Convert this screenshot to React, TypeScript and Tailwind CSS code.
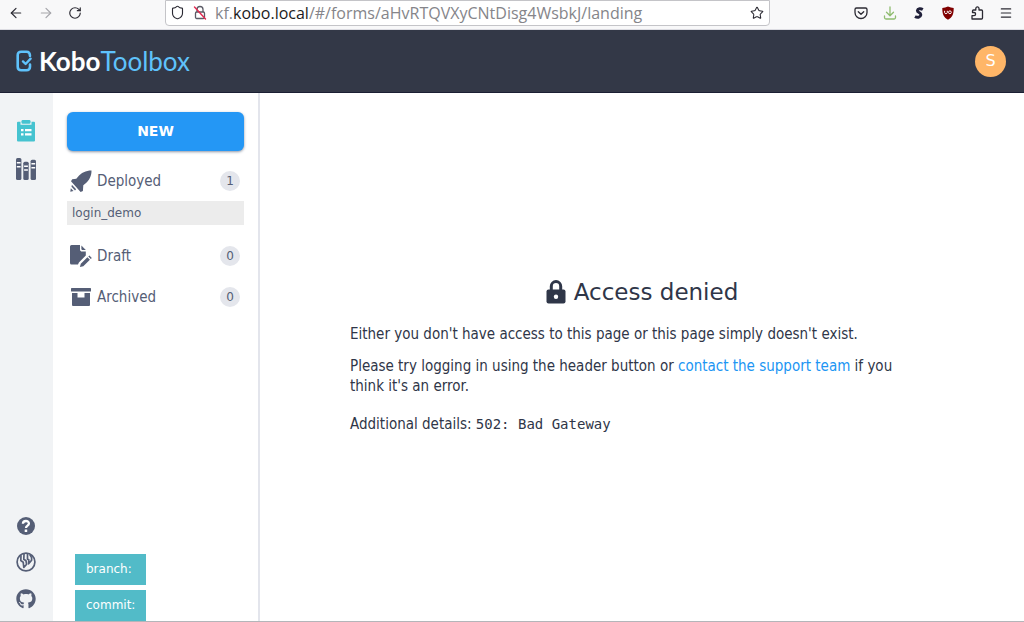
import React from "react";
import {
  ArrowLeft,
  ArrowRight,
  Menu,
  RotateCw,
  Shield,
  Star,
} from "lucide-react";
import { FaGithub } from "react-icons/fa";

function LogoMark() {
  return (
    <svg width="16" height="22" viewBox="0 0 16 22" fill="none" stroke="#5fc2fb" strokeLinecap="round" strokeLinejoin="round">
      <path
        d="M14 6C14 3 12.800 1.700 10.500 1.700H5.200C2.800 1.700 1.700 3 1.700 5.200v11.600c0 2.200 1.100 3.500 3.500 3.500h5.300c2.300 0 3.500-1.300 3.500-3.500v-2.300"
        strokeWidth="2.600"
      />
      <path d="M7 11.400l2.600 2.600L14.600 8.600" strokeWidth="2.300" />
    </svg>
  );
}

function InsecureLockIcon() {
  return (
    <svg width="14" height="16" viewBox="0 0 14 16" fill="none">
      <path d="M4 7V4.500a3 3 0 0 1 6 0V7" stroke="#5b5b66" strokeWidth="1.300" />
      <rect x="2.500" y="7" width="9" height="6.500" rx="1.200" stroke="#5b5b66" strokeWidth="1.300" />
      <path d="M1.500 2l11 12" stroke="#e22850" strokeWidth="1.400" strokeLinecap="round" />
    </svg>
  );
}

function PocketIcon() {
  return (
    <svg width="14" height="14" viewBox="0 0 14 14" fill="none" stroke="#2b2a33" strokeWidth="1.300" strokeLinecap="round" strokeLinejoin="round">
      <path d="M2.500 2h9a1.500 1.500 0 0 1 1.500 1.500V6.500a6 6 0 0 1-12 0V3.500A1.500 1.500 0 0 1 2.500 2z" />
      <path d="M4.300 5.700L7 8.300l2.700-2.600" />
    </svg>
  );
}

function DownloadIcon() {
  return (
    <svg width="14" height="14" viewBox="0 0 14 14" fill="none" stroke="#8fbc6f" strokeWidth="1.300" strokeLinecap="round" strokeLinejoin="round">
      <path d="M7 1v8.500M3.500 6.300L7 9.700l3.500-3.400" />
      <path d="M1.500 10v1.500a1.500 1.500 0 0 0 1.500 1.500h8a1.500 1.500 0 0 0 1.500-1.500V10" />
    </svg>
  );
}

function StylusIcon() {
  return (
    <svg width="10" height="12" viewBox="0 0 10 12" fill="none" stroke="#20203a" strokeWidth="2.900">
      <path d="M8.800 2.500C6.800 1.300 3.700 1.400 3.400 3.500c-.3 2.200 3.800 2 3.400 4.500C6.400 10.500 3.300 10.900 1 9.500" />
    </svg>
  );
}

function BlockerIcon() {
  return (
    <svg width="14" height="14" viewBox="0 0 14 14" fill="none">
      <path d="M7 .5c2 .9 3.800 1.300 5.700 1.400C12.700 8 11.500 11 7 13.700 2.500 11 1.300 8 1.300 1.900 3.200 1.800 5 1.400 7 .5z" fill="#800000" />
      <path d="M3.600 4.800v1.700c0 1.600 2.700 1.600 2.700 0V4.800" stroke="#fff" strokeWidth="1" />
      <circle cx="8.900" cy="6.300" r="1.400" stroke="#fff" strokeWidth="1" />
    </svg>
  );
}

function ExtensionsIcon() {
  return (
    <svg width="14" height="14" viewBox="0 0 14 14" fill="none" stroke="#2b2a33" strokeWidth="1.300" strokeLinejoin="round">
      <path d="M2 13h9.500a1 1 0 0 0 1-1V5a1 1 0 0 0-1-1H9V2.500a1.600 1.600 0 0 0-3.200 0V4H3.500a1 1 0 0 0-1 1v1.500H4a1.600 1.600 0 0 1 0 3.200H2z" />
    </svg>
  );
}

function FormsIcon() {
  return (
    <svg width="20" height="22" viewBox="0 0 20 22">
      <path d="M2 1.800h2.500v2.900h11V1.800H18a1 1 0 0 1 1 1v17.700a1 1 0 0 1-1 1H2a1 1 0 0 1-1-1V2.800a1 1 0 0 1 1-1z" fill="#46c3d0" />
      <rect x="5.500" y="0" width="9" height="3.700" rx="1.200" fill="#46c3d0" />
      <path d="M5 9h2.500v2.300H5zM9 9h6.500v2.300H9zM5 13.200h2.500v2.300H5zM9 13.200h6.500v2.300H9z" fill="#fff" />
    </svg>
  );
}

function LibraryIcon() {
  return (
    <svg width="20" height="22" viewBox="0 0 20 22">
      <rect x="0" y="0" width="5.400" height="22" rx="1.500" fill="#555e76" />
      <rect x="7.300" y="3.800" width="5.400" height="18.200" rx="1.500" fill="#555e76" />
      <rect x="14.600" y="1.800" width="5.400" height="20.200" rx="1.500" fill="#555e76" />
      <path
        d="M.8 4.700h3.800M.8 8.800h3.800M8.100 8.300h3.800M8.100 12h3.800M15.400 5.800h3.800M15.400 9.800h3.800"
        stroke="#fff"
        strokeWidth="1.400"
      />
    </svg>
  );
}

function HelpIcon() {
  return (
    <svg width="18" height="18" viewBox="0 0 18 18" fill="none">
      <circle cx="9" cy="9" r="9" fill="#555e76" />
      <path d="M5.900 6.700C6 3 12 3.200 11.900 6.600 11.800 8.600 9 8.600 9 11" stroke="#fff" strokeWidth="2.300" />
      <rect x="7.700" y="12.500" width="2.500" height="2.500" fill="#fff" />
    </svg>
  );
}

function OrganizationIcon() {
  return (
    <svg width="20" height="20" viewBox="0 0 20 20" fill="none" stroke="#555e76" strokeWidth="1.700" strokeLinejoin="round">
      <circle cx="10" cy="10" r="8.900" />
      <path d="M5 3.200L4.800 8.500l2.400 1.700.6 5.300 2.800-3.200-.6-3.500-2.200-1.600L8 2" />
      <path d="M11.500 2v5.300l1.300.5-.2 4 3-3.600V5.600L13.800 2.500" />
    </svg>
  );
}

function RocketIcon() {
  return (
    <svg width="22" height="22" viewBox="0 0 22 22" fill="#555e76">
      <path d="M21.500.5c.1 5.400-2.200 10-6.700 13.600l-1.500 1.200-.4 5.700-2.300 1L1 11.200 2.200 9.300l4.100-.6 1.500-1.800C11.200 2.800 15.800.5 21.500.5z" />
      <path d="M1.900 14.700l4.200 4.500-1.100 1.200-3.500-3.600z" />
      <path d="M.8 18.300l2.700 2.600-3.200.8z" />
    </svg>
  );
}

function DraftIcon() {
  return (
    <svg width="22" height="22" viewBox="0 0 22 22" fill="#555e76">
      <path d="M1.500 0H10v5.300l1.200 1.200h4.600v4.100L8.900 17.500 8 19.500H1.500A1.500 1.500 0 0 1 0 18V1.500A1.500 1.500 0 0 1 1.500 0z" />
      <path d="M11.400.5l4.400 4.500h-3.700l-.7-.7z" />
      <path d="M17.400 12.300l2.500 2.400-6.600 6.500-3.400.8.900-3.300zM18.300 11.400l1.100-.9 2.400 2.400-1 1z" />
    </svg>
  );
}

function ArchiveIcon() {
  return (
    <svg width="20" height="18" viewBox="0 0 20 18" fill="#555e76">
      <rect x="0" y="0" width="20" height="3.500" rx=".6" />
      <path d="M1 5h5.500v4.500h7V5H19v12a1 1 0 0 1-1 1H2a1 1 0 0 1-1-1z" />
    </svg>
  );
}

function LockIcon() {
  return (
    <svg width="20" height="24" viewBox="0 0 20 24" fill="none">
      <path d="M5.300 10.500V6.300a4.700 4.700 0 0 1 9.400 0v4.200" stroke="#2f3648" strokeWidth="3" />
      <rect x=".5" y="9.500" width="19" height="14" rx="2" fill="#2f3648" />
      <circle cx="10" cy="16.700" r="2.200" fill="#fff" />
    </svg>
  );
}

const statuses = [
  { label: "Deployed", count: 1, icon: <RocketIcon />, forms: ["login_demo"] },
  { label: "Draft", count: 0, icon: <DraftIcon />, forms: [] },
  { label: "Archived", count: 0, icon: <ArchiveIcon />, forms: [] },
];

const extensions = [
  { label: "Save to Pocket", icon: <PocketIcon /> },
  { label: "Downloads", icon: <DownloadIcon /> },
  { label: "Stylus", icon: <StylusIcon /> },
  { label: "uBlock Origin", icon: <BlockerIcon /> },
  { label: "Extensions", icon: <ExtensionsIcon /> },
  { label: "Menu", icon: <Menu size={14} strokeWidth={2} /> },
];

function BrowserBar() {
  return (
    <div className="flex h-[30px] shrink-0 items-center justify-between border-b border-[#dcdce2] bg-[#f8f8f9] pb-1 pr-1 text-[#2b2a33]">
      <div className="flex w-[165px] shrink-0 items-center gap-[14px] pl-2">
        <button aria-label="Back">
          <ArrowLeft size={16} strokeWidth={1.8} />
        </button>
        <button aria-label="Forward" className="text-[#a5a5aa]">
          <ArrowRight size={16} strokeWidth={1.8} />
        </button>
        <button aria-label="Reload">
          <RotateCw size={14} strokeWidth={2} />
        </button>
      </div>
      <div className="flex h-[26px] w-[605px] items-center rounded-b border border-[#c4c4c8] bg-white px-1">
        <Shield size={15} strokeWidth={1.8} className="mr-2 shrink-0" />
        <InsecureLockIcon />
        <div
          role="textbox"
          aria-label="Address"
          contentEditable
          suppressContentEditableWarning
          spellCheck={false}
          className="ml-2 grow whitespace-nowrap font-['Open_Sans',sans-serif] text-base leading-5 text-[#85858a] outline-none"
        >
          kf.<span className="text-[#1b1b22]">kobo.local</span>
          /#/forms/aHvRTQVXyCNtDisg4WsbkJ/landing
        </div>
        <button aria-label="Bookmark" className="pr-px">
          <Star size={14} strokeWidth={1.8} />
        </button>
      </div>
      <div className="ml-auto flex items-center">
        {extensions.map((e) => (
          <button key={e.label} aria-label={e.label} className="flex w-[29px] justify-center">
            {e.icon}
          </button>
        ))}
      </div>
    </div>
  );
}

export default function App() {
  return (
    <div className="flex min-h-screen flex-col border-b border-[#b4b5b9] bg-white font-['DejaVu_Sans_Condensed','DejaVu_Sans',sans-serif] text-[#2f3648]">
      <BrowserBar />

      <header className="flex h-[63px] shrink-0 items-center justify-between border-b border-[#1b1f33] bg-[#333847] pl-4 pr-[18px]">
        <a href="#" className="flex items-center gap-[7px]">
          <LogoMark />
          <span className="font-[Lato,sans-serif] text-[26px] leading-8 text-[#5fc2fb]">
            <span className="font-bold text-white">Kobo</span>Toolbox
          </span>
        </a>
        <button
          aria-label="Account"
          className="flex size-[31px] items-center justify-center rounded-full bg-[#ffb668] font-['DejaVu_Sans',sans-serif] text-base text-white"
        >
          S
        </button>
      </header>

      <div className="flex grow">
        <nav className="flex w-[53px] shrink-0 flex-col items-center justify-between bg-[#f1f3f5] pb-3 pr-px pt-[27px] text-[#555e76]">
          <div className="flex flex-col gap-4">
            <a href="#forms" aria-label="Projects">
              <FormsIcon />
            </a>
            <a href="#library" aria-label="Library">
              <LibraryIcon />
            </a>
          </div>
          <div className="flex flex-col items-center gap-[17px]">
            <a href="#help" aria-label="Help">
              <HelpIcon />
            </a>
            <a href="#organization" aria-label="Organization">
              <OrganizationIcon />
            </a>
            <a href="#source" aria-label="Source">
              <FaGithub size={20} />
            </a>
          </div>
        </nav>

        <aside className="flex w-[207px] shrink-0 flex-col justify-between border-r-2 border-[#e3e5ec] px-[14px] pt-[19px]">
          <div>
            <button className="mb-[15px] h-[39px] w-full rounded-md bg-[#2497f5] pb-0.5 font-['DejaVu_Sans',sans-serif] text-sm font-bold text-white shadow-sm shadow-gray-400">
              NEW
            </button>
            {statuses.map((s) => (
              <section key={s.label} className="mb-[11px]">
                <a href="#" className="flex h-[30px] items-center pl-[3px] pr-1 text-[15px] text-[#555e76]">
                  <span className="flex w-[22px] justify-center">{s.icon}</span>
                  <span className="ml-[5px] grow">{s.label}</span>
                  <span className="flex size-5 items-center justify-center rounded-full bg-[#e4e6ec] font-['DejaVu_Sans',sans-serif] text-xs">
                    {s.count}
                  </span>
                </a>
                {s.forms.map((form) => (
                  <a
                    key={form}
                    href="#"
                    className="mb-4 mt-[5px] block h-6 bg-[#ececec] px-[5px] font-['DejaVu_Sans',sans-serif] text-xs leading-6 text-[#555e76]"
                  >
                    {form}
                  </a>
                ))}
              </section>
            ))}
          </div>
          <div className="flex flex-col items-start gap-[5px] pl-2 font-['DejaVu_Sans',sans-serif] text-xs text-white">
            <div className="w-[71px] bg-[#52bbc8] px-[11px] leading-[31px]">branch:</div>
            <div className="w-[71px] bg-[#52bbc8] px-[11px] leading-[31px]">commit:</div>
          </div>
        </aside>

        <main className="flex grow items-center justify-center px-8 pb-1">
          <div className="max-w-[584px] text-[15px] leading-5">
            <h1 className="mb-4 flex items-center justify-center gap-2 font-['DejaVu_Sans',sans-serif] text-[23px] leading-8">
              <LockIcon />
              Access denied
            </h1>
            <p className="mb-3 pr-2">
              Either you don't have access to this page or this page simply doesn't exist.
            </p>
            <p className="mb-[18px] pr-2">
              Please try logging in using the header button or{" "}
              <a href="#support" className="text-[#2095f3]">
                contact the support team
              </a>{" "}
              if you think it's an error.
            </p>
            <p>
              Additional details: <code className="font-['DejaVu_Sans_Mono',monospace] text-sm">502: Bad Gateway</code>
            </p>
          </div>
        </main>
      </div>
    </div>
  );
}
